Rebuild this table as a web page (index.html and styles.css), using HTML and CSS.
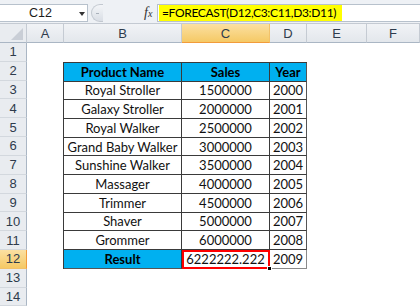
FILE: index.html
```html
<!DOCTYPE html>
<html>
<head>
<meta charset="utf-8">
<link rel="stylesheet" href="styles.css">
</head>
<body>
<div class="fbar">
  <div class="namebox"><span class="nb-text">C12</span><span class="nb-arrow"></span></div>
  <div class="splitter"><span class="knob"></span></div>
  <div class="fx">f<span class="fx-x">x</span></div>
  <div class="finput"><span class="formula">=FORECAST(D12,C3:C11,D3:D11)</span></div>
</div>
<div class="sheet">
  <div class="corner"><svg width="14" height="14" viewBox="0 0 14 14"><polygon points="14,2 14,14 2,14" fill="#c9ced6"/></svg></div>
  <div class="ch">A</div>
  <div class="ch">B</div>
  <div class="ch sel">C</div>
  <div class="ch">D</div>
  <div class="ch">E</div>
  <div class="ch">F</div>

  <div class="rh r1">1</div>
  <div class="rh r2">2</div>
  <div class="rh r3">3</div>
  <div class="rh r4">4</div>
  <div class="rh r5">5</div>
  <div class="rh r6">6</div>
  <div class="rh r7">7</div>
  <div class="rh r8">8</div>
  <div class="rh r9">9</div>
  <div class="rh r10">10</div>
  <div class="rh r11">11</div>
  <div class="rh r12 sel">12</div>
  <div class="rh r13">13</div>
  <div class="rh r14">14</div>

  <div class="tbl">
    <div class="c hd">Product Name</div><div class="c hd">Sales</div><div class="c hd">Year</div>
    <div class="c">Royal Stroller</div><div class="c">1500000</div><div class="c">2000</div>
    <div class="c">Galaxy Stroller</div><div class="c">2000000</div><div class="c">2001</div>
    <div class="c">Royal Walker</div><div class="c">2500000</div><div class="c">2002</div>
    <div class="c">Grand Baby Walker</div><div class="c">3000000</div><div class="c">2003</div>
    <div class="c">Sunshine Walker</div><div class="c">3500000</div><div class="c">2004</div>
    <div class="c">Massager</div><div class="c">4000000</div><div class="c">2005</div>
    <div class="c">Trimmer</div><div class="c">4500000</div><div class="c">2006</div>
    <div class="c">Shaver</div><div class="c">5000000</div><div class="c">2007</div>
    <div class="c">Grommer</div><div class="c">6000000</div><div class="c">2008</div>
    <div class="c hd last">Result</div><div class="c active last">6222222.222<span class="handle"></span></div><div class="c last yr">2009</div>
  </div>
</div>
</body>
</html>
```
FILE: styles.css
```css
* { box-sizing: border-box; }
html, body { margin: 0; padding: 0; }
body {
  width: 420px;
  height: 306px;
  overflow: hidden;
  background: #ffffff;
  font-family: Lato, "Open Sans", "Liberation Sans", sans-serif;
}

.fbar {
  height: 24px;
  background: #eef1f5;
  border-bottom: 1px solid #c4cad2;
  display: flex;
  align-items: flex-start;
  padding-top: 4px;
}
.namebox {
  width: 88px;
  height: 18px;
  background: #fff;
  border: 1px solid #b7c1cc;
  border-left: none;
  display: flex;
  align-items: center;
  position: relative;
}
.nb-text {
  font-size: 12.5px;
  color: #1b1b1b;
  margin-left: 29px;
  font-family: "Liberation Sans", Arial, sans-serif;
}
.nb-arrow {
  position: absolute;
  left: 79px;
  top: 7px;
  width: 0; height: 0;
  border-left: 3px solid transparent;
  border-right: 3px solid transparent;
  border-top: 4px solid #333;
}
.splitter {
  width: 12px;
  height: 18px;
  margin-left: 3px;
  border-radius: 9px 0 0 9px;
  background: linear-gradient(#f3f5f8, #d9dee5);
  border: 1px solid #c2c8d0;
  border-right: none;
  display: flex;
  align-items: center;
  justify-content: center;
}
.knob {
  width: 3px; height: 1px; background: #a9b1bb;
}
.fx {
  margin-left: 41px;
  width: 13px;
  font-family: "Liberation Serif", serif;
  font-style: italic;
  font-size: 14px;
  color: #333;
  line-height: 17px;
}
.fx-x { font-size: 10px; }
.finput {
  flex: 1;
  height: 18px;
  background: #fff;
  border: 1px solid #b7c1cc;
  border-right: none;
  padding-left: 1px;
  display: flex;
  align-items: center;
}
.formula {
  background: #ffff00;
  font-size: 12px;
  letter-spacing: -0.35px;
  color: #000;
  height: 16px;
  line-height: 16px;
  padding: 0 6px 0 3px;
  white-space: nowrap;
  font-family: Lato, "Open Sans", sans-serif;
}

.sheet {
  display: grid;
  grid-template-columns: 27px 37px 118px 88px 37px 60px 1fr;
  grid-template-rows: 19px repeat(14, 18.82px);
}
.corner {
  background: #e9ecf0;
  border-right: 1px solid #c5cbd3;
  border-bottom: 1px solid #aab6c4;
  display: flex;
  align-items: flex-end;
  justify-content: flex-end;
  padding: 0 3px 2px 0;
}
.ch {
  background: linear-gradient(#f1f3f6, #e3e7ec);
  border-right: 1px solid #c5cbd3;
  border-bottom: 1px solid #aab6c4;
  display: flex;
  align-items: center;
  justify-content: center;
  font-size: 13px;
  color: #2e3b4c;
  font-family: "Liberation Sans", Arial, sans-serif;
}
.ch.sel {
  background: linear-gradient(#fbe0a2, #f5c965);
  border-bottom: 1px solid #f29b3a;
  border-right: 1px solid #f2c26a;
}
.rh {
  grid-column: 1;
  background: #e9ecf0;
  border-right: 1px solid #aab6c4;
  border-bottom: 1px solid #d3d8de;
  display: flex;
  align-items: center;
  justify-content: center;
  font-size: 13px;
  color: #2e3b4c;
  font-family: "Liberation Sans", Arial, sans-serif;
}
.rh.sel {
  background: linear-gradient(#fbe0a2, #f5c965);
  border-right: 1px solid #f29b3a;
  border-bottom: 1px solid #f2c26a;
}
.r1 { grid-row: 2; }
.r2 { grid-row: 3; }
.r3 { grid-row: 4; }
.r4 { grid-row: 5; }
.r5 { grid-row: 6; }
.r6 { grid-row: 7; }
.r7 { grid-row: 8; }
.r8 { grid-row: 9; }
.r9 { grid-row: 10; }
.r10 { grid-row: 11; }
.r11 { grid-row: 12; }
.r12 { grid-row: 13; }
.r13 { grid-row: 14; }
.r14 { grid-row: 15; }

.tbl {
  grid-column: 3 / 6;
  grid-row: 3 / 14;
  display: grid;
  grid-template-columns: 118px 88px 37px;
  grid-template-rows: repeat(11, 1fr);
  margin-left: -1px;
  border-left: 1px solid #3a3a3a;
  border-top: 1px solid #3a3a3a;
}
.c {
  border-right: 1px solid #3a3a3a;
  border-bottom: 1px solid #3a3a3a;
  display: flex;
  align-items: center;
  justify-content: center;
  font-size: 13px;
  color: #111;
  white-space: nowrap;
  position: relative;
}
.c.hd {
  background: #00b0f0;
  font-weight: bold;
  color: #000;
}
.c:nth-child(3n) {
  border-right-color: #555;
}
.c.last { border-bottom-color: #555; }
.c.yr { border-right-color: #8a8a8a; border-bottom-color: #8a8a8a; }
.c.active {
  outline: 2px solid #ff0000;
  outline-offset: -2px;
  z-index: 1;
}
.handle {
  position: absolute;
  right: -3px;
  bottom: -3px;
  width: 5px;
  height: 5px;
  background: #000;
  border: 1px solid #fff;
}
```
